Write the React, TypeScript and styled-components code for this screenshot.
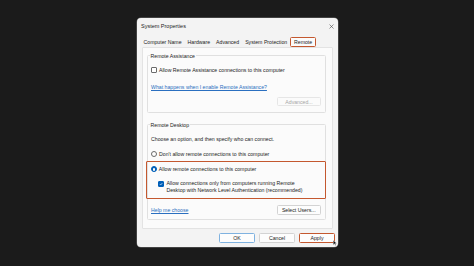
import styled, { createGlobalStyle } from "styled-components";

const GlobalStyle = createGlobalStyle`
  html, body {
    margin: 0;
    padding: 0;
    background: #1b1b1b;
  }
  body {
    font-family: "Liberation Sans", Arial, sans-serif;
  }
`;

const ORANGE = "#c4582f";
const ACCENT = "#005fb8";

const Screen = styled.div`
  width: 474px;
  height: 266px;
  box-sizing: border-box;
  padding: 18px 0 0 137px;
  background: #1b1b1b;
  overflow: hidden;
`;

const Dialog = styled.div`
  position: relative;
  width: 201px;
  height: 229px;
  display: flex;
  flex-direction: column;
  background: #f3f3f3;
  border-radius: 4px;
  box-shadow: 0 0 0 0.5px #6a6a6a;
  font-size: 5.2px;
  line-height: 6px;
  color: #1b1b1b;
`;

const TitleBar = styled.div`
  height: 16px;
  display: flex;
  align-items: center;
  justify-content: space-between;
  padding: 0 4px;
`;

const Title = styled.span`
  font-size: 5.5px;
`;

const TabStrip = styled.div`
  height: 13px;
  display: flex;
  align-items: flex-end;
  padding-left: 3.5px;
`;

const Tab = styled.div<{ $active?: boolean }>`
  height: 10px;
  box-sizing: border-box;
  display: flex;
  align-items: center;
  padding: 0 ${(p) => (p.$active ? "2.8px" : "2px")};
  border: 1px solid ${(p) => (p.$active ? ORANGE : "transparent")};
  border-radius: 1.5px;
  background: ${(p) => (p.$active ? "#fbfbfb" : "transparent")};
  white-space: nowrap;
`;

const TabPage = styled.div`
  height: 182px;
  box-sizing: border-box;
  margin: 0 5px;
  padding: 4.7px 6px 0 3.5px;
  background: #fbfbfb;
  border: 1px solid #e3e3e3;
  border-radius: 1px;
  display: flex;
  flex-direction: column;
`;

const Group = styled.fieldset<{ $top?: number }>`
  margin: ${(p) => p.$top ?? 0}px 0 0 0;
  padding: 0 4px 0 3.5px;
  border: 1px solid #e0e0e0;
  border-radius: 1.5px;
  min-inline-size: 0;
  display: flex;
  flex-direction: column;
`;

const Legend = styled.legend`
  padding: 0 1px;
  margin-left: -1.5px;
  line-height: 6px;
  font-size: 5.2px;
`;

const Row = styled.div<{ $top?: number; $indent?: number }>`
  display: flex;
  align-items: flex-start;
  gap: 2px;
  margin-top: ${(p) => p.$top ?? 0}px;
  padding-left: ${(p) => p.$indent ?? 0}px;
  white-space: nowrap;
`;

const Label = styled.span`
  line-height: 6.4px;
  margin-top: -0.2px;
`;

const Link = styled.span`
  color: #2a6fc0;
  text-decoration: underline;
  text-decoration-thickness: 0.4px;
  text-underline-offset: 0.6px;
`;

const Box = styled.span<{ $checked?: boolean }>`
  flex: none;
  width: 6px;
  height: 6px;
  box-sizing: border-box;
  border: 0.7px solid ${(p) => (p.$checked ? ACCENT : "#6b6b6b")};
  border-radius: 1px;
  background: ${(p) => (p.$checked ? ACCENT : "#fff")};
  display: flex;
  align-items: center;
  justify-content: center;
`;

const Radio = styled.span<{ $checked?: boolean }>`
  flex: none;
  width: 6px;
  height: 6px;
  box-sizing: border-box;
  border-radius: 50%;
  border: 0.7px solid ${(p) => (p.$checked ? ACCENT : "#6b6b6b")};
  background: ${(p) => (p.$checked ? ACCENT : "#fff")};
  display: flex;
  align-items: center;
  justify-content: center;

  &::after {
    content: "";
    display: ${(p) => (p.$checked ? "block" : "none")};
    width: 2.4px;
    height: 2.4px;
    border-radius: 50%;
    background: #fff;
  }
`;

const Highlight = styled.div`
  height: 38px;
  box-sizing: border-box;
  margin: 3.4px -5px 0 -5px;
  padding: 4.6px 0 0 3.8px;
  border: 1px solid ${ORANGE};
  border-radius: 1px;
`;

const ActionRow = styled.div<{ $top?: number; $bottom?: number; $split?: boolean }>`
  display: flex;
  align-items: center;
  justify-content: ${(p) => (p.$split ? "space-between" : "flex-end")};
  margin-top: ${(p) => p.$top ?? 0}px;
  margin-bottom: ${(p) => p.$bottom ?? 0}px;
`;

const Button = styled.button<{ $variant?: "default" | "marked"; $width?: number; $height?: number }>`
  width: ${(p) => p.$width ?? 36}px;
  height: ${(p) => p.$height ?? 10}px;
  box-sizing: border-box;
  padding: 0;
  font-family: inherit;
  font-size: 5.2px;
  line-height: 6px;
  color: #1b1b1b;
  background: #fdfdfd;
  border: ${(p) =>
    p.$variant === "default"
      ? "1px solid #7fb2e0"
      : p.$variant === "marked"
      ? `1.2px solid ${ORANGE}`
      : "0.7px solid #d3d3d3"};
  border-radius: 1.5px;

  &:disabled {
    color: #a6a6a6;
    border-color: #e6e6e6;
    background: #fbfbfb;
  }
`;

const Footer = styled.div`
  display: flex;
  justify-content: flex-end;
  gap: 4px;
  margin-top: 3.7px;
  padding-right: 3px;
`;

const Cursor = styled.svg`
  position: absolute;
  left: 195.5px;
  top: 222px;
`;

const CloseIcon = () => (
  <svg width="5" height="5" viewBox="0 0 10 10">
    <path d="M1 1 L9 9 M9 1 L1 9" stroke="#3a3a3a" strokeWidth="1.1" fill="none" />
  </svg>
);

const Tick = () => (
  <svg width="4" height="4" viewBox="0 0 10 10">
    <path d="M2 5.2 L4.2 7.4 L8.2 2.8" stroke="#fff" strokeWidth="1.6" fill="none" />
  </svg>
);

const tabs = ["Computer Name", "Hardware", "Advanced", "System Protection", "Remote"];

export default function App() {
  return (
    <>
      <GlobalStyle />
      <Screen>
        <Dialog>
          <TitleBar>
            <Title>System Properties</Title>
            <CloseIcon />
          </TitleBar>
          <TabStrip>
            {tabs.map((t) => (
              <Tab key={t} $active={t === "Remote"}>
                {t}
              </Tab>
            ))}
          </TabStrip>
          <TabPage>
            <Group>
              <Legend>Remote Assistance</Legend>
              <Row $top={8}>
                <Box />
                <Label>Allow Remote Assistance connections to this computer</Label>
              </Row>
              <Row $top={11}>
                <Link>What happens when I enable Remote Assistance?</Link>
              </Row>
              <ActionRow $top={7} $bottom={5.3}>
                <Button disabled $width={44} $height={9.5}>
                  Advanced...
                </Button>
              </ActionRow>
            </Group>
            <Group $top={9}>
              <Legend>Remote Desktop</Legend>
              <Row $top={8}>
                <Label>Choose an option, and then specify who can connect.</Label>
              </Row>
              <Row $top={9.3}>
                <Radio />
                <Label>Don&apos;t allow remote connections to this computer</Label>
              </Row>
              <Highlight>
                <Row>
                  <Radio $checked />
                  <Label>Allow remote connections to this computer</Label>
                </Row>
                <Row $top={8} $indent={7.6}>
                  <Box $checked>
                    <Tick />
                  </Box>
                  <Label>
                    Allow connections only from computers running Remote
                    <br />
                    Desktop with Network Level Authentication (recommended)
                  </Label>
                </Row>
              </Highlight>
              <ActionRow $top={6} $bottom={4.3} $split>
                <Link>Help me choose</Link>
                <Button $width={44.5}>Select Users...</Button>
              </ActionRow>
            </Group>
          </TabPage>
          <Footer>
            <Button $variant="default" $height={10.6}>
              OK
            </Button>
            <Button $height={10.6}>Cancel</Button>
            <Button $variant="marked" $height={10.6}>
              Apply
            </Button>
          </Footer>
          <Cursor width="4" height="6" viewBox="0 0 8 12">
            <path d="M0.5 0.5 L0.5 10 L3 7.6 L4.6 11.2 L6 10.6 L4.5 7.1 L7.6 7.1 Z" fill="#111" stroke="#fff" strokeWidth="0.8" />
          </Cursor>
        </Dialog>
      </Screen>
    </>
  );
}
